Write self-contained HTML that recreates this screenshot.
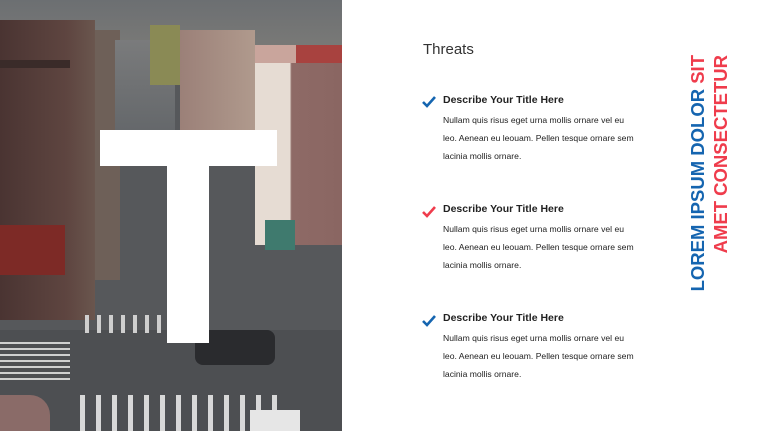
<!DOCTYPE html>
<html><head><style>
*{margin:0;padding:0;box-sizing:border-box}
body{width:768px;height:431px;background:#fff;position:relative;overflow:hidden;font-family:"Liberation Sans",sans-serif}
.photo{position:absolute;left:0;top:0;width:342px;height:431px;background:#56585b;overflow:hidden}
.photo div{position:absolute}
.t{background:#fff;position:absolute}
h1{position:absolute;left:423px;top:41px;font-size:15px;font-weight:normal;color:#333;letter-spacing:0}
.chk{position:absolute;left:422px}
.item{position:absolute;left:443px;width:240px}
.item b{display:block;font-size:10.5px;color:#222;margin-bottom:5px}
.item p{font-size:8.6px;line-height:18px;color:#222;white-space:nowrap}
.rot{position:absolute;left:686px;top:292px;transform-origin:0 0;transform:rotate(-90deg);font-weight:bold;font-size:18.5px;line-height:23px;text-align:right;width:237px;white-space:nowrap}
.blue{color:#1565b0}.red{color:#ef3c4c}
</style></head><body>
<div class="photo">
 <div style="left:0;top:0;width:342px;height:60px;background:linear-gradient(#6c6f72,#7d7c78)"></div>
 <div style="left:0;top:20px;width:95px;height:300px;background:linear-gradient(90deg,#4a3432,#5e4540 70%,#6a564e)"></div>
 <div style="left:0;top:60px;width:70px;height:8px;background:#3a2b29"></div>
 <div style="left:95px;top:30px;width:25px;height:250px;background:#6e6058"></div>
 <div style="left:115px;top:40px;width:60px;height:90px;background:linear-gradient(#7a7b7c,#65686b)"></div>
 <div style="left:150px;top:25px;width:30px;height:60px;background:#8a8a55"></div>
 <div style="left:180px;top:30px;width:75px;height:100px;background:linear-gradient(90deg,#9b8078,#b09a8d)"></div>
 <div style="left:255px;top:45px;width:87px;height:200px;background:linear-gradient(90deg,#e6dcd3 0,#e6dcd3 40%,#8e6a66 42%,#8a6662)"></div>
 <div style="left:255px;top:45px;width:87px;height:18px;background:#c9a59c"></div>
 <div style="left:296px;top:45px;width:46px;height:18px;background:#a8423f"></div>
 <div style="left:0;top:225px;width:65px;height:50px;background:#7d2a26"></div>
 <div style="left:265px;top:220px;width:30px;height:30px;background:#3f7a6e"></div>
 <div style="left:0;top:330px;width:342px;height:101px;background:#4d4f52"></div>
 <div style="left:0;top:342px;width:70px;height:40px;background:repeating-linear-gradient(#cfd0d0 0 2px,transparent 2px 6px)"></div>
 <div style="left:80px;top:395px;width:200px;height:36px;background:repeating-linear-gradient(90deg,#d8d8d8 0 5px,transparent 5px 16px)"></div>
 <div style="left:85px;top:315px;width:80px;height:18px;background:repeating-linear-gradient(90deg,#cfcfcf 0 4px,transparent 4px 12px)"></div>
 <div style="left:195px;top:330px;width:80px;height:35px;background:#2a2b2e;border-radius:8px"></div>
 <div style="left:250px;top:410px;width:50px;height:21px;background:#e6e6e6"></div>
 <div style="left:0;top:395px;width:50px;height:36px;background:#8a6b68;border-radius:0 20px 0 0"></div>
</div>
<div class="t" style="left:100px;top:130px;width:177px;height:36px"></div>
<div class="t" style="left:167px;top:165px;width:42px;height:178px"></div>

<h1>Threats</h1>

<svg class="chk" style="top:96px" width="14" height="12" viewBox="0 0 14 12"><path d="M1 6 L5 10 L13 1" fill="none" stroke="#1565b0" stroke-width="2.6"/></svg>
<div class="item" style="top:94px"><b>Describe Your Title Here</b><p>Nullam quis risus eget urna mollis ornare vel eu<br>leo. Aenean eu leouam. Pellen tesque ornare sem<br>lacinia mollis ornare.</p></div>

<svg class="chk" style="top:206px" width="14" height="12" viewBox="0 0 14 12"><path d="M1 6 L5 10 L13 1" fill="none" stroke="#ef3c4c" stroke-width="2.6"/></svg>
<div class="item" style="top:203px"><b>Describe Your Title Here</b><p>Nullam quis risus eget urna mollis ornare vel eu<br>leo. Aenean eu leouam. Pellen tesque ornare sem<br>lacinia mollis ornare.</p></div>

<svg class="chk" style="top:315px" width="14" height="12" viewBox="0 0 14 12"><path d="M1 6 L5 10 L13 1" fill="none" stroke="#1565b0" stroke-width="2.6"/></svg>
<div class="item" style="top:312px"><b>Describe Your Title Here</b><p>Nullam quis risus eget urna mollis ornare vel eu<br>leo. Aenean eu leouam. Pellen tesque ornare sem<br>lacinia mollis ornare.</p></div>

<div class="rot"><span class="blue">LOREM IPSUM DOLOR </span><span class="red">SIT</span><br><span class="red">AMET CONSECTETUR</span></div>
</body></html>
